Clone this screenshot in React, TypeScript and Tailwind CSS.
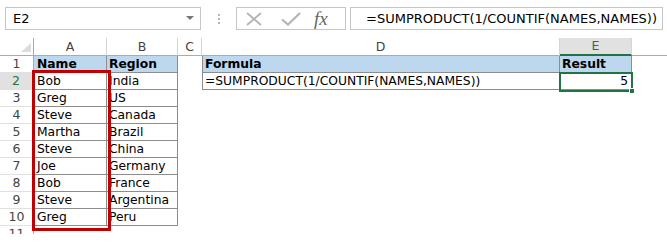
import React from "react";

const cellFont = { fontFamily: '"DejaVu Sans", Verdana, sans-serif' };

const rows = [
  ["Bob", "India"],
  ["Greg", "US"],
  ["Steve", "Canada"],
  ["Martha", "Brazil"],
  ["Steve", "China"],
  ["Joe", "Germany"],
  ["Bob", "France"],
  ["Steve", "Argentina"],
  ["Greg", "Peru"],
];

const ColHead = ({ label, active }: { label: string; active?: boolean }) => (
  <div
    className={`flex items-center justify-center border-r border-[#d4d4d4] text-[12.5px] ${
      active
        ? "bg-[#e1e1e1] text-[#217346] border-b-2 border-b-[#217346]"
        : "text-[#444] border-b border-b-[#ababab]"
    }`}
  >
    {label}
  </div>
);

const RowHead = ({ n, active }: { n: number; active?: boolean }) => (
  <div
    className={`flex items-center justify-center h-[17px] border-b border-[#e1e1e1] text-[12.5px] ${
      active
        ? "bg-[#e1e1e1] text-[#217346] border-r-2 border-r-[#217346]"
        : "text-[#444] border-r border-r-[#ababab]"
    }`}
  >
    {n}
  </div>
);

export default function App() {
  return (
    <div className="relative w-[667px] h-[244px] bg-white overflow-hidden" style={cellFont}>
      {/* formula bar */}
      <div className="flex items-start h-[38px] pt-[7px] pl-[5px]">
        <div className="flex items-center justify-between w-[196px] h-[23px] border border-[#c6c6c6] pl-[7px] pr-[6px] text-[13px] text-black">
          <span>E2</span>
          <svg width="8" height="5" viewBox="0 0 8 5">
            <path d="M0 0 L8 0 L4 4 Z" fill="#777" />
          </svg>
        </div>
        <div className="flex flex-col justify-center gap-[2px] w-[35px] h-[23px] items-center">
          <span className="w-[2px] h-[2px] bg-[#b5b5b5]" />
          <span className="w-[2px] h-[2px] bg-[#b5b5b5]" />
          <span className="w-[2px] h-[2px] bg-[#b5b5b5]" />
        </div>
        <div className="flex items-center w-[110px] h-[23px] border border-[#c6c6c6]">
          <svg width="16" height="14" viewBox="0 0 16 14" className="ml-[9px]">
            <path d="M1 1 L15 13 M15 1 L1 13" stroke="#b4b4b4" strokeWidth="1.8" />
          </svg>
          <svg width="20" height="14" viewBox="0 0 20 14" className="ml-[19px]">
            <path d="M1 7.5 L7 12.5 L19 1" stroke="#b4b4b4" strokeWidth="2.2" fill="none" />
          </svg>
          <span
            className="ml-[13px] text-[19px] italic text-[#666] leading-none"
            style={{ fontFamily: '"Liberation Serif", "Times New Roman", serif' }}
          >
            fx
          </span>
        </div>
        <div className="flex items-center w-[313px] h-[23px] ml-[4px] border border-[#c6c6c6] pl-[15px] text-[13px] text-black">
          =SUMPRODUCT(1/COUNTIF(NAMES,NAMES))
        </div>
      </div>

      {/* grid */}
      <div className="h-[196px] overflow-hidden">
        <div className="grid grid-cols-[34px_73px_71px_24px_358px_72px_1fr] grid-rows-[18px] auto-rows-[17px] text-[12.3px] leading-[16px] text-black">
          <div className="relative border-r border-b border-[#ababab]">
            <svg width="10" height="9" viewBox="0 0 10 9" className="absolute right-[2px] bottom-[3px]">
              <path d="M10 0 L10 9 L0 9 Z" fill="#dcdcdc" />
            </svg>
          </div>
          <ColHead label="A" />
          <ColHead label="B" />
          <ColHead label="C" />
          <ColHead label="D" />
          <ColHead label="E" active />
          <div className="border-b border-[#ababab]" />

          {/* row 1 */}
          <RowHead n={1} />
          <div className="bg-[#bdd7ee] border-r border-b border-[#8c8c8c] pl-[3px] font-bold">Name</div>
          <div className="bg-[#bdd7ee] border-r border-b border-[#8c8c8c] pl-[2px] font-bold">Region</div>
          <div />
          <div className="bg-[#bdd7ee] border-l border-r border-b border-[#8c8c8c] pl-[2px] font-bold">Formula</div>
          <div className="bg-[#bdd7ee] border-r border-b border-[#8c8c8c] pl-[2px] font-bold">Result</div>
          <div />

          {/* row 2 */}
          <RowHead n={2} active />
          <div className="border-r border-b border-[#8c8c8c] pl-[3px]">{rows[0][0]}</div>
          <div className="border-r border-b border-[#8c8c8c] pl-[2px]">{rows[0][1]}</div>
          <div />
          <div className="border-l border-r border-b border-[#8c8c8c] pl-[2px]">
            =SUMPRODUCT(1/COUNTIF(NAMES,NAMES))
          </div>
          <div className="border-r border-b border-[#8c8c8c] pr-[3px] text-right">5</div>
          <div />

          {rows.slice(1).map((r, i) => (
            <React.Fragment key={i}>
              <RowHead n={i + 3} />
              <div className="border-r border-b border-[#8c8c8c] pl-[3px]">{r[0]}</div>
              <div className="border-r border-b border-[#8c8c8c] pl-[2px]">{r[1]}</div>
              <div />
              <div />
              <div />
              <div />
            </React.Fragment>
          ))}

          <RowHead n={11} />
        </div>
      </div>

      {/* red annotation box */}
      <div className="absolute left-[32px] top-[70px] w-[79px] h-[161px] border-[3px] border-[#c00000]" />

      {/* active cell E2 */}
      <div className="absolute left-[559px] top-[72px] w-[74px] h-[20px] border-2 border-[#217346]" />
      <div className="absolute left-[629px] top-[88px] w-[6px] h-[6px] bg-[#217346] border border-white" />
    </div>
  );
}
